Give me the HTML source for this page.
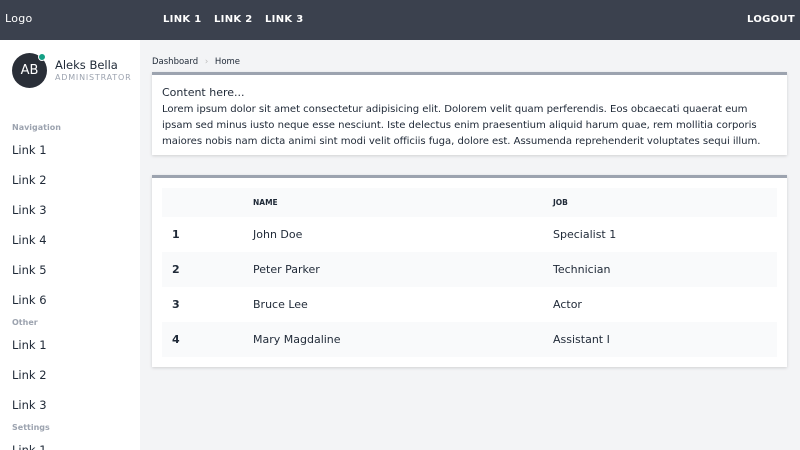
<!DOCTYPE html>
<html style="width:800px;height:450px;overflow:hidden"><head><style>
*{margin:0;padding:0;box-sizing:border-box}
body{width:800px;height:450px;overflow:hidden;font-family:"DejaVu Sans","Liberation Sans",sans-serif;background:#f3f4f6;color:#1f2937;position:relative}
.hd{position:absolute;left:0;top:0;width:800px;height:40px;background:#3b414e;color:#fff}
.hd span{position:absolute;top:14px;font-size:10px;font-weight:bold;letter-spacing:.3px}
.sb{position:absolute;left:0;top:40px;width:140px;height:410px;background:#fff;overflow:hidden}
.av{position:absolute;left:12px;top:13px;width:35px;height:35px;border-radius:50%;background:#2a2f38;color:#fff;font-size:13px;text-align:center;line-height:35px}
.dot{position:absolute;left:38px;top:13px;width:8px;height:8px;border-radius:50%;background:#14a085;border:1.5px solid #fff}
.sec{position:absolute;left:12px;font-size:8px;font-weight:bold;color:#9ca3af}
.lk{position:absolute;left:12px;font-size:11.5px;color:#1f2937}
.card{position:absolute;left:152px;width:635px;background:#fff;border-top:3px solid #9ca3af;box-shadow:0 1px 3px rgba(0,0,0,.15);overflow:hidden}
.p{font-size:10.1px;line-height:16px;padding:10px 10px;color:#1f2937;white-space:nowrap;letter-spacing:-0.04px}
.row{position:absolute;left:10px;width:615px;height:35px;font-size:11px}
.row span{position:absolute;top:11px}
</style></head><body>
<div class="hd"><span style="left:5px;font-weight:normal;font-size:11px;top:12px">Logo</span><span style="left:163px">LINK 1</span><span style="left:214px">LINK 2</span><span style="left:265px">LINK 3</span><span style="left:747px">LOGOUT</span></div>
<div class="sb">
<div class="av">AB</div><div class="dot"></div>
<div style="position:absolute;left:55px;top:18px;font-size:11.5px">Aleks Bella</div>
<div style="position:absolute;left:55px;top:33px;font-size:8px;color:#9ca3af;letter-spacing:.8px">ADMINISTRATOR</div>
<div class="sec" style="top:83px">Navigation</div>
<div class="lk" style="top:103px">Link 1</div><div class="lk" style="top:133px">Link 2</div><div class="lk" style="top:163px">Link 3</div><div class="lk" style="top:193px">Link 4</div><div class="lk" style="top:223px">Link 5</div><div class="lk" style="top:253px">Link 6</div>
<div class="sec" style="top:278px">Other</div>
<div class="lk" style="top:298px">Link 1</div><div class="lk" style="top:328px">Link 2</div><div class="lk" style="top:358px">Link 3</div>
<div class="sec" style="top:383px">Settings</div>
<div class="lk" style="top:403px">Link 1</div>
</div>
<div style="position:absolute;left:152px;top:57px;font-size:8.5px">Dashboard <span style="color:#bbb;margin:0 4px">›</span> Home</div>
<div class="card" style="top:72px;height:83px"><div class="p"><span style="font-size:11px;letter-spacing:0">Content here...</span><br>Lorem ipsum dolor sit amet consectetur adipisicing elit. Dolorem velit quam perferendis. Eos obcaecati quaerat eum<br>ipsam sed minus iusto neque esse nesciunt. Iste delectus enim praesentium aliquid harum quae, rem mollitia corporis<br><span style="letter-spacing:-0.05px">maiores nobis nam dicta animi sint modi velit officiis fuga, dolore est. Assumenda reprehenderit voluptates sequi illum.</span></div></div>
<div class="card" style="top:175px;height:192px">
<div class="row" style="top:10px;height:29px;background:#f9fafb;font-size:7.5px;font-weight:bold"><span style="left:91px;top:10px">NAME</span><span style="left:391px;top:10px">JOB</span></div>
<div class="row" style="top:39px"><span style="left:10px;font-weight:bold">1</span><span style="left:91px">John Doe</span><span style="left:391px">Specialist 1</span></div>
<div class="row" style="top:74px;background:#f9fafb"><span style="left:10px;font-weight:bold">2</span><span style="left:91px">Peter Parker</span><span style="left:391px">Technician</span></div>
<div class="row" style="top:109px"><span style="left:10px;font-weight:bold">3</span><span style="left:91px">Bruce Lee</span><span style="left:391px">Actor</span></div>
<div class="row" style="top:144px;background:#f9fafb"><span style="left:10px;font-weight:bold">4</span><span style="left:91px">Mary Magdaline</span><span style="left:391px">Assistant I</span></div>
</div>
</body></html>
